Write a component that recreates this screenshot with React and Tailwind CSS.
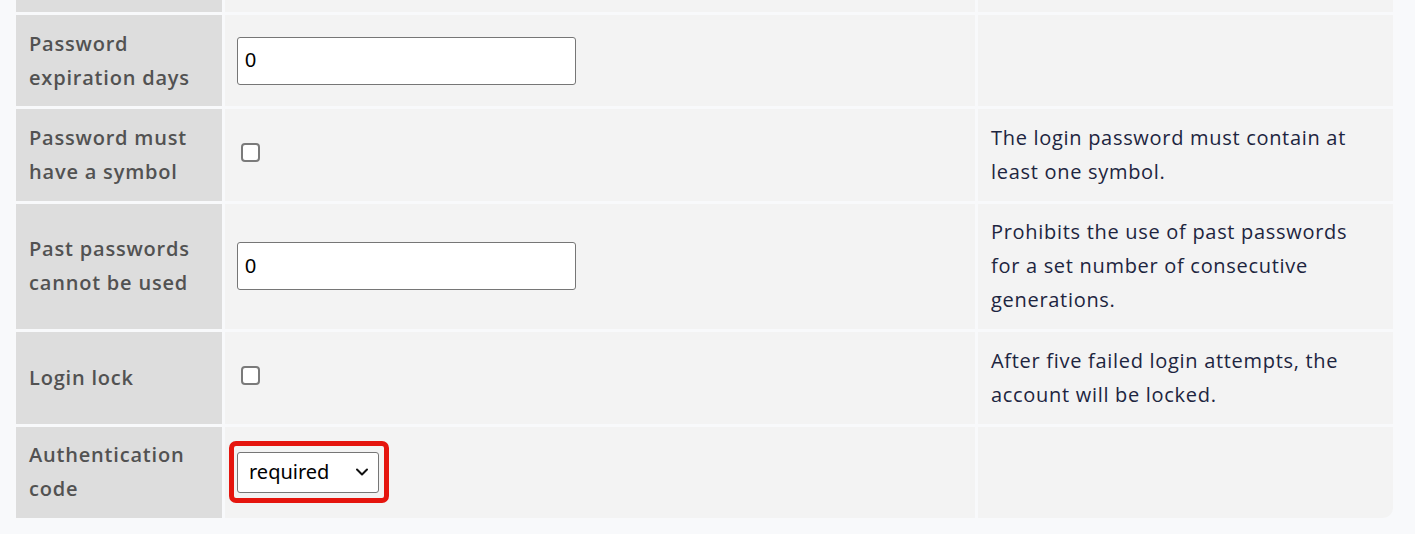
import React from "react";

const font = { fontFamily: "'Open Sans', 'Noto Sans', sans-serif" };

function Label({ children }) {
  return (
    <div className="bg-[#dddddd] px-[13px] py-[11.7px] flex items-center text-[20px] leading-[34px] font-semibold tracking-[0.8px] text-[#525252]">
      <span>{children}</span>
    </div>
  );
}

function Value({ children }) {
  return <div className="bg-[#f3f3f3] px-3 py-[11.7px] flex items-center">{children}</div>;
}

function Desc({ children, last }) {
  return (
    <div
      className={
        "bg-[#f3f3f3] px-[13px] py-[11.7px] flex items-center text-[20px] leading-[34px] tracking-[0.7px] text-[#1d2540] " +
        (last ? "rounded-br-[10px]" : "")
      }
    >
      <span>{children}</span>
    </div>
  );
}

function TextInput() {
  return (
    <input
      type="text"
      defaultValue="0"
      className="w-[339px] h-[48px] bg-white border border-[#767676] rounded-[3px] px-[7px] text-[20px] text-black outline-none"
      style={{ fontFamily: "'Liberation Sans', Arial, sans-serif" }}
    />
  );
}

function Check() {
  return (
    <span className="inline-block ml-1 -mt-[5px] w-[19px] h-[19px] bg-white border-2 border-[#7a7a7a] rounded-[4px]" />
  );
}

export default function App() {
  return (
    <div className="min-h-[534px] bg-[#f8f9fb] pl-4" style={font}>
      <div className="grid grid-cols-[206px_750px_415px] gap-[3px] w-[1377px]">
        <div className="bg-[#dddddd] h-[12px]" />
        <div className="bg-[#f3f3f3] h-[12px]" />
        <div className="bg-[#f3f3f3] h-[12px]" />

        <Label>
          Password
          <br />
          expiration days
        </Label>
        <Value>
          <TextInput />
        </Value>
        <Desc />

        <Label>
          Password must
          <br />
          have a symbol
        </Label>
        <Value>
          <Check />
        </Value>
        <Desc>
          The login password must contain at
          <br />
          least one symbol.
        </Desc>

        <Label>
          Past passwords
          <br />
          cannot be used
        </Label>
        <Value>
          <TextInput />
        </Value>
        <Desc>
          Prohibits the use of past passwords
          <br />
          for a set number of consecutive
          <br />
          generations.
        </Desc>

        <Label>Login lock</Label>
        <Value>
          <Check />
        </Value>
        <Desc>
          After five failed login attempts, the
          <br />
          account will be locked.
        </Desc>

        <Label>
          Authentication
          <br />
          code
        </Label>
        <Value>
          <div className="relative">
            <div className="w-[142px] h-[41px] bg-white border border-[#767676] rounded-[3px] flex items-center justify-between pl-[11px] pr-[9px] text-[20px] text-black">
              <span style={{ fontFamily: "'Noto Sans', 'Liberation Sans', sans-serif" }}>required</span>
              <svg width="14" height="14" viewBox="0 0 14 14" fill="none">
                <path d="M2 4.5 L7 9.5 L12 4.5" stroke="#111" strokeWidth="2" strokeLinecap="round" strokeLinejoin="round" />
              </svg>
            </div>
            <span className="pointer-events-none absolute -left-[8px] -right-[10px] -top-[11px] -bottom-[10px] border-[5px] border-[#e5150e] rounded-[7px]" />
          </div>
        </Value>
        <Desc last />
      </div>
    </div>
  );
}
